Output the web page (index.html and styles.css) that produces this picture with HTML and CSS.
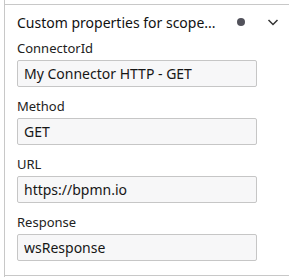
FILE: index.html
```html
<!DOCTYPE html>
<html>
<head>
  <title>Custom properties</title>
  <link rel="stylesheet" href="styles.css">
</head>
<body>
  <div class="panel">
    <div class="group">
      <div class="group-header">
        <span class="group-title">Custom properties for scope...</span>
        <span class="dot"></span>
        <svg class="chevron" width="16" height="16" viewBox="0 0 16 16">
          <path d="M3.5 6 L8 10.5 L12.5 6" fill="none" stroke="#333" stroke-width="1.5"/>
        </svg>
      </div>
      <div class="entries">
        <div class="entry">
          <label class="label">ConnectorId</label>
          <input class="input" type="text" value="My Connector HTTP - GET">
        </div>
        <div class="entry">
          <label class="label">Method</label>
          <input class="input" type="text" value="GET">
        </div>
        <div class="entry">
          <label class="label">URL</label>
          <input class="input" type="text" value="https://bpmn.io">
        </div>
        <div class="entry">
          <label class="label">Response</label>
          <input class="input" type="text" value="wsResponse">
        </div>
      </div>
    </div>
  </div>
</body>
</html>
```
FILE: styles.css
```css
body {
  margin: 0;
  font-family: "Noto Sans", "Open Sans", sans-serif;
  color: #161616;
  background: #fff;
}

.panel {
  margin-left: 4px;
  padding-top: 4px;
  border-left: 1px solid #c8c8c8;
  height: 273px;
}

.group {
  border-top: 1px solid #c8c8c8;
  border-bottom: 1px solid #c8c8c8;
}

.group-header {
  display: flex;
  align-items: center;
  height: 34px;
  padding-left: 12px;
  padding-right: 8px;
}

.group-title {
  flex: 1;
  font-size: 14px;
  font-weight: 400;
  color: #111;
}

.dot {
  width: 8px;
  height: 8px;
  border-radius: 50%;
  background: #52525b;
  margin-right: 20px;
}

.chevron {
  display: block;
}

.entries {
  padding: 0 32px 14px 12px;
}

.entry {
  margin-bottom: 10px;
}

.entry:last-child {
  margin-bottom: 0;
}

.label {
  display: block;
  font-size: 13px;
  line-height: 19px;
  margin-bottom: 2px;
  color: #222;
}

.input {
  display: block;
  box-sizing: border-box;
  width: 100%;
  height: 27px;
  padding: 3px 6px;
  border: 1px solid #c6c6c6;
  border-radius: 2px;
  background: #f7f7f8;
  font-family: inherit;
  font-size: 14px;
  color: #161616;
}
```
